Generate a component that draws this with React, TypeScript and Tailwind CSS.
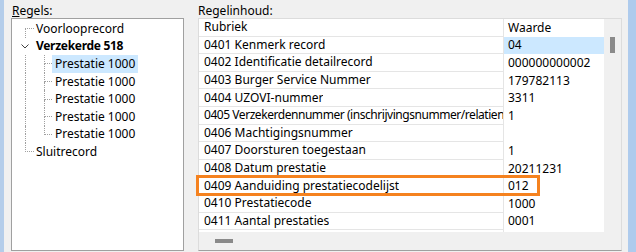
import React from "react";

const rows: [string, string][] = [
  ["0401 Kenmerk record", "04"],
  ["0402 Identificatie detailrecord", "000000000002"],
  ["0403 Burger Service Nummer", "179782113"],
  ["0404 UZOVI-nummer", "3311"],
  ["0405 Verzekerdennummer (inschrijvingsnummer/relatienummer)", "1"],
  ["0406 Machtigingsnummer", ""],
  ["0407 Doorsturen toegestaan", "1"],
  ["0408 Datum prestatie", "20211231"],
  ["0409 Aanduiding prestatiecodelijst", "012"],
  ["0410 Prestatiecode", "1000"],
  ["0411 Aantal prestaties", "0001"],
];

// one tree connector column: vertical line on the left, optional horizontal stub
const Conn = ({
  up,
  down,
  stub,
  lead,
}: {
  up: boolean;
  down: boolean;
  stub: boolean;
  lead: string;
}) => (
  <div className={`flex h-full shrink-0 ${lead}`}>
    <div className="flex h-full w-[9px] flex-col">
      <div
        className={`flex-1 ${up ? "border-l border-dotted border-[#a0a0a0]" : ""} ${
          stub ? "border-b border-dotted border-[#a0a0a0]" : ""
        }`}
      />
      <div className={`flex-1 ${down ? "border-l border-dotted border-[#a0a0a0]" : ""}`} />
    </div>
  </div>
);

const Tree = () => {
  const kids = [0, 1, 2, 3, 4];
  return (
    <div className="flex flex-col pt-[1px]">
      <div className="flex h-[17.6px] items-center">
        <Conn up={false} down={true} stub={true} lead="w-[24px] pl-[13px]" />
        <span>Voorlooprecord</span>
      </div>
      <div className="flex h-[17.6px] items-center">
        <div className="flex w-[24px] shrink-0 items-center pl-[9px]">
          <svg width="8" height="5" viewBox="0 0 8 5">
            <path d="M0.5 0.5 L4 4 L7.5 0.5" fill="none" stroke="#404040" strokeWidth="1" />
          </svg>
        </div>
        <span className="font-bold tracking-[-0.3px]">Verzekerde 518</span>
      </div>
      {kids.map((i) => (
        <div key={i} className="flex h-[17.6px] items-center">
          <Conn up={true} down={true} stub={false} lead="w-[24px] pl-[13px]" />
          <Conn up={true} down={i < 4} stub={true} lead="w-[16px] pl-[8px]" />
          <span className={`flex h-full items-center px-[3px] ${i === 0 ? "bg-[#cce8ff]" : ""}`}>
            Prestatie 1000
          </span>
        </div>
      ))}
      <div className="flex h-[17.6px] items-center">
        <Conn up={true} down={false} stub={true} lead="w-[24px] pl-[13px]" />
        <span>Sluitrecord</span>
      </div>
    </div>
  );
};

export default function App() {
  return (
    <div className="relative flex h-[252px] w-[636px] overflow-hidden bg-[#f0f0f0] font-['Segoe_UI','Noto_Sans',sans-serif] text-[12px] text-black">
      <div className="w-[4px] shrink-0 bg-[#b4cdea]" />

      <div className="flex shrink-0 flex-col pl-[7px]">
        <div className="flex h-[18px] items-center pl-[1px] pt-[3px]">
          <span className="underline">R</span>egels:
        </div>
        <div className="h-[233px] w-[173px] border border-[#a0a0a0] bg-white">
          <Tree />
        </div>
      </div>

      <div className="w-[14px] shrink-0" />

      <div className="flex shrink-0 flex-col">
        <div className="flex h-[18px] items-center pt-[3px]">Regelinhoud:</div>
        <div className="flex h-[233px] w-[424px] flex-col border border-[#dcdcdc] border-b-[#a0a0a0]">
          <div className="flex h-[213px]">
            <div className="flex w-[405px] flex-col bg-white">
              <div className="flex h-[17.6px]">
                <div className="flex w-[305px] items-center border-b border-r border-[#e5e5e5] pl-[5px]">
                  Rubriek
                </div>
                <div className="flex w-[100px] items-center pl-[4px]">Waarde</div>
              </div>
              {rows.map(([k, v], i) => (
                <div key={k} className="flex h-[17.6px]">
                  <div
                    className={`flex w-[305px] items-center overflow-hidden whitespace-nowrap border-b border-r border-[#e5e5e5] pl-[5px] ${
                      i === 4 ? "tracking-[-0.45px]" : ""
                    }`}
                  >
                    <span className="min-w-0 overflow-hidden">{k}</span>
                  </div>
                  <div
                    className={`flex w-[100px] items-center whitespace-nowrap pl-[4px] ${
                      i === 0 ? "bg-[#cce8ff]" : ""
                    }`}
                  >
                    {v}
                  </div>
                </div>
              ))}
              <div className="flex flex-1">
                <div className="w-[305px] border-r border-[#e5e5e5]" />
              </div>
            </div>
            <div className="flex w-[17px] flex-col pl-[6px] pt-[18px]">
              <div className="h-[16px] w-[5px] bg-[#8a8a8a]" />
            </div>
          </div>
          <div className="flex flex-1">
            <div className="w-[405px] pl-[16px] pt-[7px]">
              <div className="h-[4px] w-[18px] bg-[#8a8a8a]" />
            </div>
          </div>
        </div>
      </div>

      <div className="w-[6px] shrink-0" />
      <div className="w-[8px] shrink-0 bg-[#aecbed]" />

      <div className="absolute left-[196px] top-[175px] h-[21px] w-[344px] border-[3px] border-[#f5821f]" />
    </div>
  );
}
